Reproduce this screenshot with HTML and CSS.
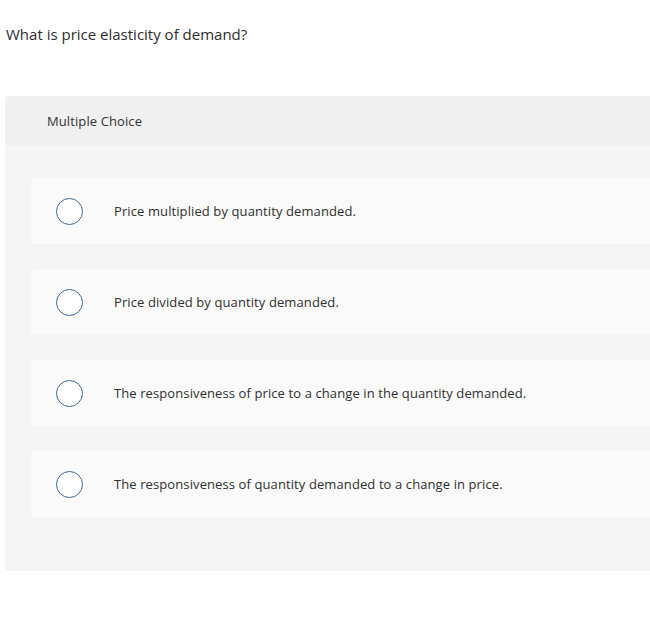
FILE: index.html
```html
<!DOCTYPE html>
<html>
<head>
<meta charset="utf-8">
<link rel="stylesheet" href="styles.css">
</head>
<body>
<div class="question">What is price elasticity of demand?</div>
<div class="panel">
  <div class="panel-head">Multiple Choice</div>
  <div class="panel-body">
    <div class="option"><span class="radio"></span><span class="label">Price multiplied by quantity demanded.</span></div>
    <div class="option"><span class="radio"></span><span class="label">Price divided by quantity demanded.</span></div>
    <div class="option"><span class="radio"></span><span class="label">The responsiveness of price to a change in the quantity demanded.</span></div>
    <div class="option"><span class="radio"></span><span class="label">The responsiveness of quantity demanded to a change in price.</span></div>
  </div>
</div>
</body>
</html>
```
FILE: styles.css
```css
html, body {
  margin: 0;
  padding: 0;
  background: #ffffff;
  overflow: hidden;
}
body {
  font-family: "Open Sans", "Lato", sans-serif;
  color: #333333;
}
.question {
  padding: 24px 0 0 6px;
  font-size: 15px;
  line-height: 20px;
  height: 72px;
  color: #2d2d2d;
}
.panel {
  margin-left: 5px;
  border-radius: 4px 0 0 4px;
  overflow: hidden;
  background: #f5f5f5;
}
.panel-head {
  background: #f0f0f0;
  height: 49px;
  display: flex;
  align-items: center;
  padding-left: 42px;
  font-size: 13px;
  letter-spacing: 0.1px;
}
.panel-body {
  padding: 33px 0 54px 26px;
  display: flex;
  flex-direction: column;
  gap: 25px;
}
.option {
  background: #fafafa;
  height: 66px;
  border-radius: 3px 0 0 3px;
  display: flex;
  align-items: center;
  padding-left: 25px;
}
.radio {
  width: 25px;
  height: 25px;
  border: 1.5px solid #3a6892;
  border-radius: 50%;
  background: #ffffff;
  flex: none;
}
.label {
  margin-left: 31px;
  font-size: 13px;
  letter-spacing: 0.1px;
  color: #2f2f2f;
}
```
